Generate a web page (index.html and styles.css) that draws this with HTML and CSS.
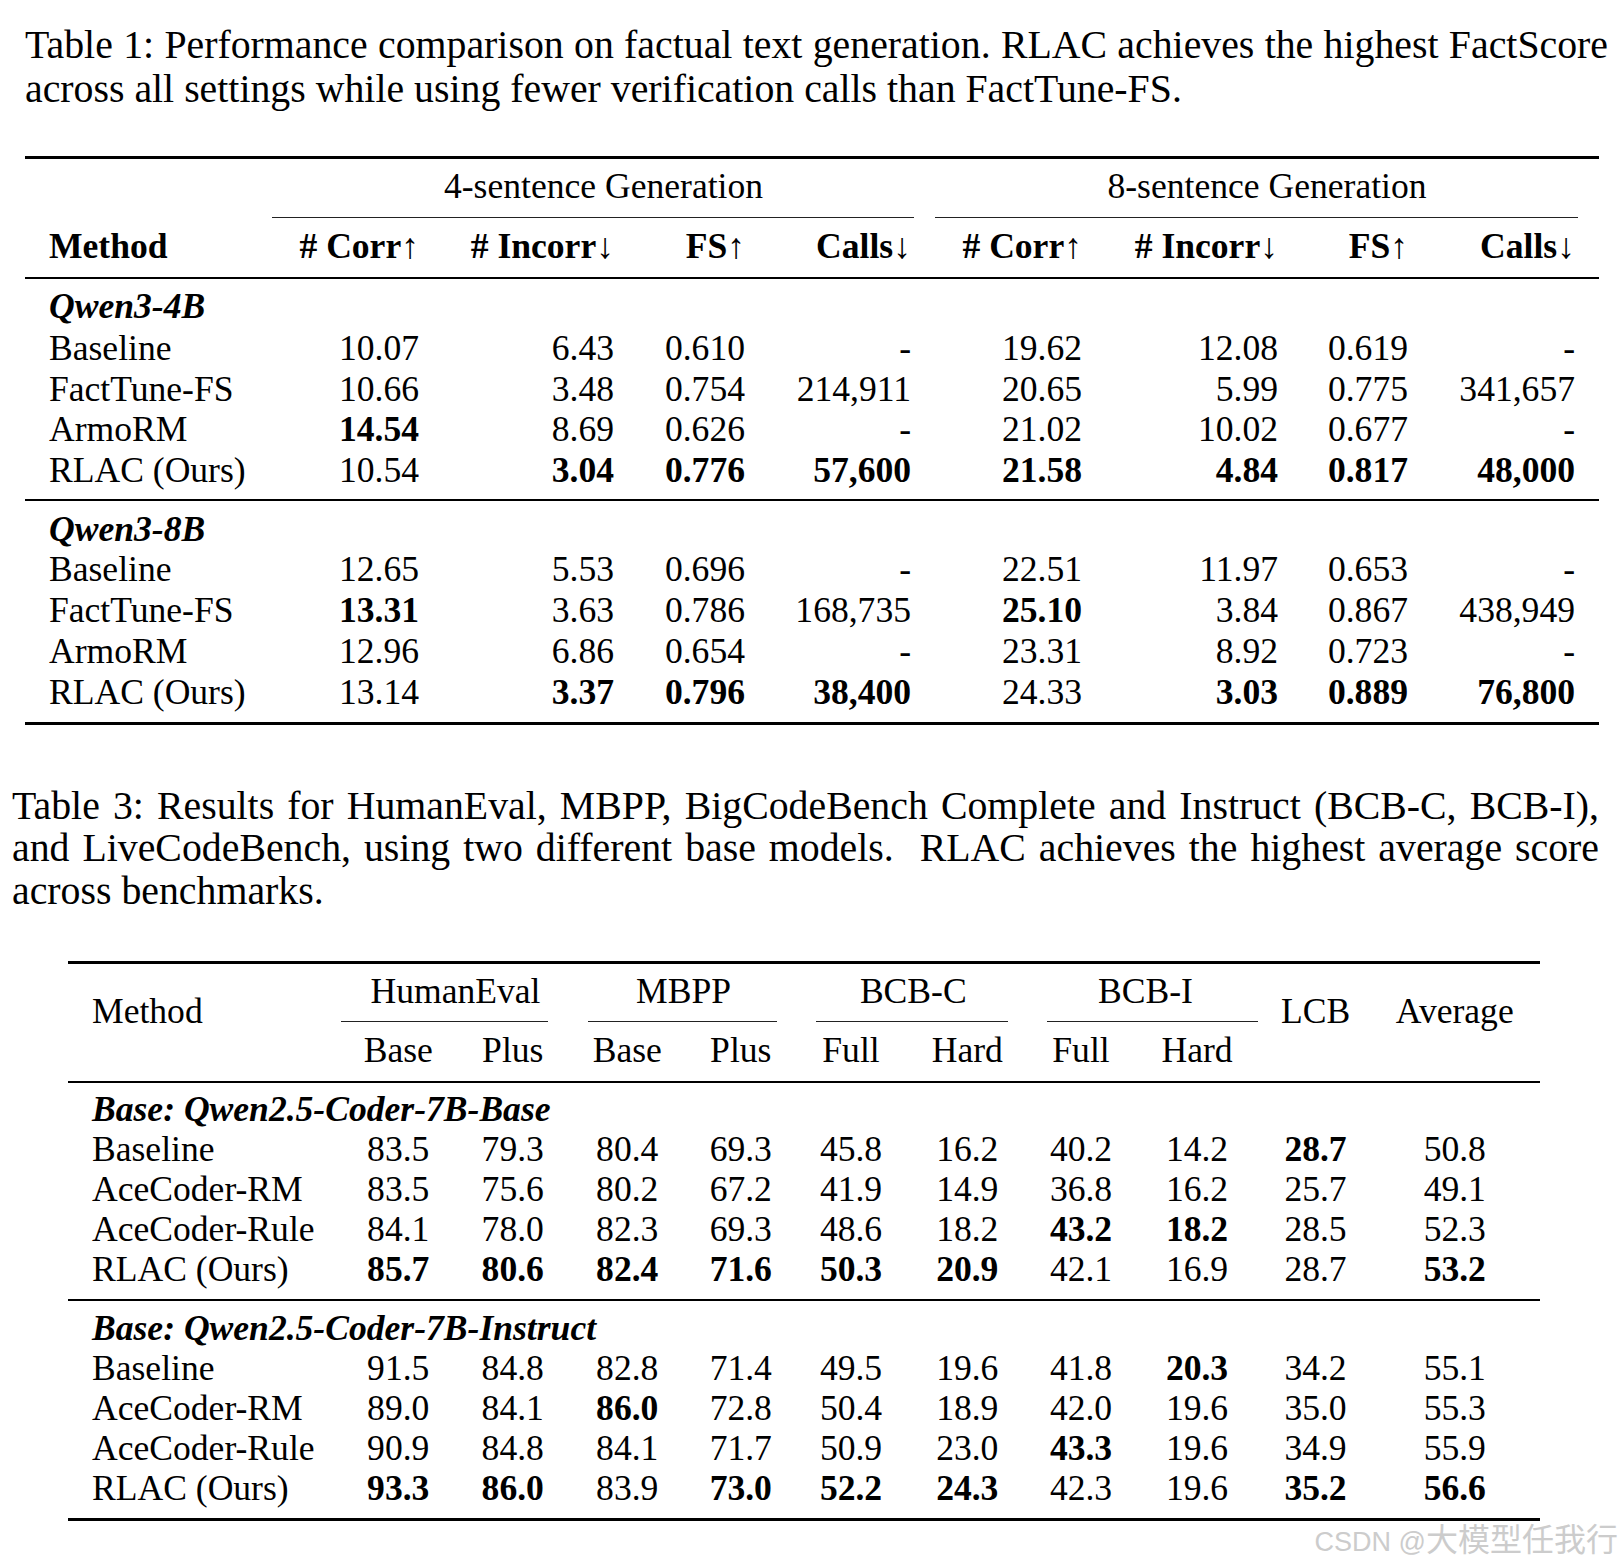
FILE: index.html
```html
<!DOCTYPE html>
<html lang="en">
<head>
    <meta charset="UTF-8">
    <title>RLAC Results Tables</title>
    <link rel="stylesheet" href="styles.css">
</head>
<body>
<div class="page">

    <!-- Table 1: factual text generation -->
    <p class="caption caption-t1">
        <span class="line">Table 1: Performance comparison on factual text generation. RLAC achieves the highest FactScore</span>
        <span class="line last">across all settings while using fewer verification calls than FactTune-FS.</span>
    </p>

    <table class="tbl t1">
        <colgroup>
            <col><col><col><col><col><col><col><col><col>
        </colgroup>
        <thead>
            <tr class="group">
                <th></th>
                <th colspan="4"><div class="group-title">4-sentence Generation</div><div class="cmid trim-r"></div></th>
                <th colspan="4"><div class="group-title">8-sentence Generation</div><div class="cmid trim-r"></div></th>
            </tr>
            <tr class="sub">
                <th class="method">Method</th>
                <th># Corr<span class="arrow">&uarr;</span></th>
                <th># Incorr<span class="arrow">&darr;</span></th>
                <th>FS<span class="arrow">&uarr;</span></th>
                <th>Calls<span class="arrow">&darr;</span></th>
                <th># Corr<span class="arrow">&uarr;</span></th>
                <th># Incorr<span class="arrow">&darr;</span></th>
                <th>FS<span class="arrow">&uarr;</span></th>
                <th>Calls<span class="arrow">&darr;</span></th>
            </tr>
        </thead>
        <tbody>
            <tr class="section"><td colspan="9">Qwen3-4B</td></tr>
            <tr><td>Baseline</td><td>10.07</td><td>6.43</td><td>0.610</td><td>-</td><td>19.62</td><td>12.08</td><td>0.619</td><td>-</td></tr>
            <tr><td>FactTune-FS</td><td>10.66</td><td>3.48</td><td>0.754</td><td>214,911</td><td>20.65</td><td>5.99</td><td>0.775</td><td>341,657</td></tr>
            <tr><td>ArmoRM</td><td><b>14.54</b></td><td>8.69</td><td>0.626</td><td>-</td><td>21.02</td><td>10.02</td><td>0.677</td><td>-</td></tr>
            <tr><td>RLAC (Ours)</td><td>10.54</td><td><b>3.04</b></td><td><b>0.776</b></td><td><b>57,600</b></td><td><b>21.58</b></td><td><b>4.84</b></td><td><b>0.817</b></td><td><b>48,000</b></td></tr>
        </tbody>
        <tbody>
            <tr class="section"><td colspan="9">Qwen3-8B</td></tr>
            <tr><td>Baseline</td><td>12.65</td><td>5.53</td><td>0.696</td><td>-</td><td>22.51</td><td>11.97</td><td>0.653</td><td>-</td></tr>
            <tr><td>FactTune-FS</td><td><b>13.31</b></td><td>3.63</td><td>0.786</td><td>168,735</td><td><b>25.10</b></td><td>3.84</td><td>0.867</td><td>438,949</td></tr>
            <tr><td>ArmoRM</td><td>12.96</td><td>6.86</td><td>0.654</td><td>-</td><td>23.31</td><td>8.92</td><td>0.723</td><td>-</td></tr>
            <tr><td>RLAC (Ours)</td><td>13.14</td><td><b>3.37</b></td><td><b>0.796</b></td><td><b>38,400</b></td><td>24.33</td><td><b>3.03</b></td><td><b>0.889</b></td><td><b>76,800</b></td></tr>
        </tbody>
    </table>

    <!-- Table 3: code generation benchmarks -->
    <p class="caption caption-t3">
        <span class="line">Table 3: Results for HumanEval, MBPP, BigCodeBench Complete and Instruct (BCB-C, BCB-I),</span>
        <span class="line">and LiveCodeBench, using two different base models.&nbsp; RLAC achieves the highest average score</span>
        <span class="line last">across benchmarks.</span>
    </p>

    <table class="tbl t3">
        <colgroup>
            <col><col><col><col><col><col><col><col><col><col><col>
        </colgroup>
        <thead>
            <tr class="group">
                <th class="method multi" rowspan="2">Method</th>
                <th colspan="2"><div class="group-title">HumanEval</div><div class="cmid he"></div></th>
                <th colspan="2"><div class="group-title">MBPP</div><div class="cmid mbpp"></div></th>
                <th colspan="2"><div class="group-title">BCB-C</div><div class="cmid bcbc"></div></th>
                <th colspan="2"><div class="group-title">BCB-I</div><div class="cmid bcbi"></div></th>
                <th class="multi" rowspan="2">LCB</th>
                <th class="multi" rowspan="2">Average</th>
            </tr>
            <tr class="sub">
                <th>Base</th><th>Plus</th>
                <th>Base</th><th>Plus</th>
                <th>Full</th><th>Hard</th>
                <th>Full</th><th>Hard</th>
            </tr>
        </thead>
        <tbody>
            <tr class="section"><td colspan="11">Base: Qwen2.5-Coder-7B-Base</td></tr>
            <tr><td>Baseline</td><td>83.5</td><td>79.3</td><td>80.4</td><td>69.3</td><td>45.8</td><td>16.2</td><td>40.2</td><td>14.2</td><td><b>28.7</b></td><td>50.8</td></tr>
            <tr><td>AceCoder-RM</td><td>83.5</td><td>75.6</td><td>80.2</td><td>67.2</td><td>41.9</td><td>14.9</td><td>36.8</td><td>16.2</td><td>25.7</td><td>49.1</td></tr>
            <tr><td>AceCoder-Rule</td><td>84.1</td><td>78.0</td><td>82.3</td><td>69.3</td><td>48.6</td><td>18.2</td><td><b>43.2</b></td><td><b>18.2</b></td><td>28.5</td><td>52.3</td></tr>
            <tr><td>RLAC (Ours)</td><td><b>85.7</b></td><td><b>80.6</b></td><td><b>82.4</b></td><td><b>71.6</b></td><td><b>50.3</b></td><td><b>20.9</b></td><td>42.1</td><td>16.9</td><td>28.7</td><td><b>53.2</b></td></tr>
        </tbody>
        <tbody>
            <tr class="section"><td colspan="11">Base: Qwen2.5-Coder-7B-Instruct</td></tr>
            <tr><td>Baseline</td><td>91.5</td><td>84.8</td><td>82.8</td><td>71.4</td><td>49.5</td><td>19.6</td><td>41.8</td><td><b>20.3</b></td><td>34.2</td><td>55.1</td></tr>
            <tr><td>AceCoder-RM</td><td>89.0</td><td>84.1</td><td><b>86.0</b></td><td>72.8</td><td>50.4</td><td>18.9</td><td>42.0</td><td>19.6</td><td>35.0</td><td>55.3</td></tr>
            <tr><td>AceCoder-Rule</td><td>90.9</td><td>84.8</td><td>84.1</td><td>71.7</td><td>50.9</td><td>23.0</td><td><b>43.3</b></td><td>19.6</td><td>34.9</td><td>55.9</td></tr>
            <tr><td>RLAC (Ours)</td><td><b>93.3</b></td><td><b>86.0</b></td><td>83.9</td><td><b>73.0</b></td><td><b>52.2</b></td><td><b>24.3</b></td><td>42.3</td><td>19.6</td><td><b>35.2</b></td><td><b>56.6</b></td></tr>
        </tbody>
    </table>

    <div class="watermark"><span class="wm-latin">CSDN @</span>大模型任我行</div>
</div>
</body>
</html>
```

FILE: styles.css
```css
/* Paper-style result tables */
body {
    margin: 0;
    background-color: #fff;
    color: #000;
    font-family: "Liberation Serif", "Times New Roman", serif;
}
.page {
    position: relative;
    padding-top: 24px;
    min-height: 1543px;
}

/* Captions: justified lines like the LaTeX output */
.caption {
    margin: 0;
    font-size: 39.8px;
}
.caption .line {
    display: block;
    text-align: justify;
    text-align-last: justify;
}
.caption .line.last {
    text-align-last: left;
}
.caption-t1 {
    margin-left: 25px;
    width: 1583px;
    line-height: 43.5px;
}
.caption-t3 {
    margin-left: 12px;
    margin-top: 60px;
    width: 1587px;
    line-height: 42.5px;
}

/* Shared table rules (booktabs look) */
.tbl {
    border-collapse: collapse;
    table-layout: fixed;
    font-size: 35.6px;
}
.tbl th,
.tbl td {
    padding: 0;
    white-space: nowrap;
}
.tbl thead {
    border-top: 3px solid #000;
    border-bottom: 2px solid #000;
}
.tbl tbody + tbody {
    border-top: 2px solid #000;
}
.tbl tbody:last-child {
    border-bottom: 3px solid #000;
}
.tbl .group th {
    font-weight: normal;
    padding-top: 7px;
    vertical-align: top;
}
.group-title {
    text-align: center;
}
.cmid {
    border-top: 1.5px solid #222;
    margin-top: 11px;
}
.cmid.trim-r {
    margin-right: 21px;
}
.tbl .section td {
    font-weight: bold;
    font-style: italic;
}
.arrow {
    font-weight: normal;
}

/* Table 1 */
.t1 {
    margin-top: 44.5px;
    margin-left: 25px;
    width: 1574px;
    line-height: 40.8px;
}
.t1 .group th {
    line-height: 40.5px;
}
.t1 col:nth-child(1) { width: 247px; }
.t1 col:nth-child(2) { width: 171px; }
.t1 col:nth-child(3) { width: 195px; }
.t1 col:nth-child(4) { width: 131px; }
.t1 col:nth-child(5) { width: 166px; }
.t1 col:nth-child(6) { width: 171px; }
.t1 col:nth-child(7) { width: 196px; }
.t1 col:nth-child(8) { width: 130px; }
.t1 col:nth-child(9) { width: 167px; }
.t1 .sub th {
    font-weight: bold;
    text-align: right;
    padding: 8px 24px 10px 0;
    line-height: 40.5px;
}
.t1 .sub th.method {
    text-align: left;
    padding-left: 24px;
}
.t1 td {
    text-align: right;
    padding-right: 24px;
}
.t1 td:first-child {
    text-align: left;
    padding-left: 24px;
    padding-right: 0;
}
.t1 .section td {
    padding-bottom: 1.5px;
}
.t1 tbody tr:first-child td {
    padding-top: 7px;
}
.t1 tbody tr:last-child td {
    padding-bottom: 8px;
}
.t1 tbody + tbody tr.section td {
    padding-top: 10.5px;
    padding-bottom: 0;
    line-height: 37.8px;
}
.t1 tbody + tbody tr:last-child td {
    padding-bottom: 9.5px;
}

/* Table 3 */
.t3 {
    margin-top: 48.5px;
    margin-left: 68px;
    width: 1472px;
    line-height: 40px;
}
.t3 col:nth-child(1) { width: 273px; }
.t3 col:nth-child(2) { width: 114.5px; }
.t3 col:nth-child(3) { width: 114.5px; }
.t3 col:nth-child(4) { width: 114.5px; }
.t3 col:nth-child(5) { width: 112.5px; }
.t3 col:nth-child(6) { width: 108px; }
.t3 col:nth-child(7) { width: 124.5px; }
.t3 col:nth-child(8) { width: 103px; }
.t3 col:nth-child(9) { width: 129px; }
.t3 col:nth-child(10) { width: 108px; }
.t3 col:nth-child(11) { width: 170.5px; }
.t3 .cmid {
    margin-top: 10px;
}
.t3 .group th.multi {
    padding-top: 27.5px;
    text-align: center;
}
.t3 .group th.method {
    text-align: left;
    padding-left: 24px;
}
.t3 .sub th {
    font-weight: normal;
    text-align: center;
    padding: 8px 0 11.5px;
}
.t3 .cmid.he { margin-right: 22px; }
.t3 .cmid.mbpp { margin-left: 18px; margin-right: 20px; }
.t3 .cmid.bcbc { margin-left: 19px; margin-right: 22px; }
.t3 .cmid.bcbi { margin-left: 17px; margin-right: 4px; }
.t3 td {
    text-align: center;
}
.t3 td:first-child {
    text-align: left;
    padding-left: 24px;
}
.t3 tbody tr:first-child td {
    padding-top: 6px;
}
.t3 tbody tr:last-child td {
    padding-bottom: 10px;
}
.t3 tbody + tbody tr:first-child td {
    padding-top: 7px;
}
.t3 tbody + tbody tr:last-child td {
    padding-bottom: 9.5px;
}

/* CSDN watermark over the bottom-right corner */
.watermark {
    position: absolute;
    right: 4px;
    top: 1515px;
    font-family: "Noto Sans CJK SC", sans-serif;
    font-size: 32px;
    line-height: 44px;
    color: #cccccc;
    white-space: nowrap;
}
.wm-latin {
    font-family: "Liberation Sans", sans-serif;
    font-size: 27px;
}
```
